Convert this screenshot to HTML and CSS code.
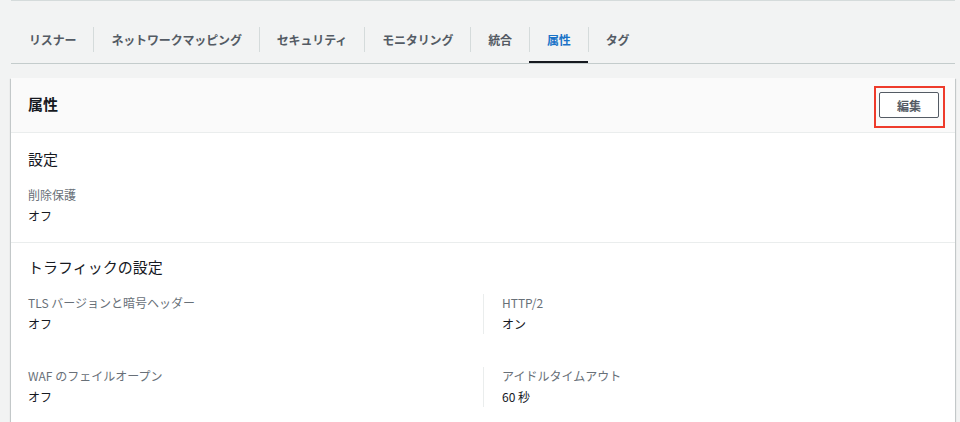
FILE: index.html
```html
<!DOCTYPE html>
<html lang="ja">
<head>
  <meta charset="UTF-8">
  <meta name="viewport" content="width=device-width, initial-scale=1.0">
  <title>属性</title>
  <link rel="stylesheet" href="styles.css">
</head>
<body>
  <div class="page">
    <div class="top-edge"></div>

    <ul class="tabs">
      <li class="tab"><span>リスナー</span></li>
      <li class="tab"><span>ネットワークマッピング</span></li>
      <li class="tab"><span>セキュリティ</span></li>
      <li class="tab"><span>モニタリング</span></li>
      <li class="tab"><span>統合</span></li>
      <li class="tab active"><span>属性</span></li>
      <li class="tab"><span>タグ</span></li>
    </ul>

    <div class="card">
      <div class="card-header">
        <h2 class="card-title">属性</h2>
        <span class="highlight">
          <button class="btn">編集</button>
        </span>
      </div>

      <div class="section">
        <h3 class="section-title">設定</h3>
        <div class="grid">
          <div class="item">
            <div class="label">削除保護</div>
            <div class="value">オフ</div>
          </div>
        </div>
      </div>

      <div class="section">
        <h3 class="section-title">トラフィックの設定</h3>
        <div class="grid two-col">
          <div class="item">
            <div class="label">TLS バージョンと暗号ヘッダー</div>
            <div class="value">オフ</div>
          </div>
          <div class="item split">
            <div class="label">HTTP/2</div>
            <div class="value">オン</div>
          </div>
          <div class="item">
            <div class="label">WAF のフェイルオープン</div>
            <div class="value">オフ</div>
          </div>
          <div class="item split">
            <div class="label">アイドルタイムアウト</div>
            <div class="value">60 秒</div>
          </div>
        </div>
      </div>
    </div>
  </div>
</body>
</html>
```

FILE: styles.css
```css
body {
  margin: 0;
  background: #f2f3f3;
  font-family: "Noto Sans CJK JP", "Noto Sans", sans-serif;
  color: #16191f;
  overflow: hidden;
}
.page {
  margin: 0 5px 0 11px;
}
.top-edge {
  height: 0;
  border-top: 1px solid #d5dbdb;
}
.tabs {
  list-style: none;
  margin: 14px 0 0;
  padding: 0;
  display: flex;
  border-bottom: 1px solid #c4cccc;
}
.tab {
  padding: 12px 0 9px;
  border-bottom: 2px solid transparent;
  font-size: 12px;
  font-weight: 700;
  letter-spacing: -0.15px;
  color: #545b64;
}
.tab span {
  display: block;
  padding: 0 17px;
  line-height: 25px;
  border-left: 1px solid #d5dbdb;
}
.tab:first-child span {
  padding-left: 18px;
  border-left: none;
}
.tab.active {
  color: #1a73c8;
  border-bottom-color: #16191f;
}
.card {
  margin-top: 14px;
  background: #fff;
  box-shadow: 0 1px 1px 0 rgba(0, 28, 36, 0.3), 1px 1px 1px 0 rgba(0, 28, 36, 0.15), -1px 1px 1px 0 rgba(0, 28, 36, 0.15);
}
.card-header {
  display: flex;
  align-items: center;
  justify-content: space-between;
  padding: 8px 10px 4px 17px;
  background: #fafafa;
  border-bottom: 1px solid #eaeded;
}
.card-title {
  margin: 0 0 6px;
  font-size: 15px;
  font-weight: 700;
  line-height: 22px;
}
.highlight {
  display: block;
  padding: 4px 4px 8px 3px;
  border: 2px solid #ee3b2b;
}
.btn {
  display: block;
  width: 60px;
  height: 26px;
  padding: 0;
  background: #fff;
  border: 1px solid #545b64;
  border-radius: 2px;
  font-family: inherit;
  font-size: 12px;
  font-weight: 700;
  color: #545b64;
}
.section {
  padding: 15px 17px 16px;
  border-bottom: 1px solid #eaeded;
}
.section + .section {
  padding-top: 13px;
}
.section-title {
  margin: 0 0 16px;
  font-size: 15px;
  font-weight: 400;
  line-height: 22px;
}
.grid {
  display: grid;
  grid-template-columns: 1fr;
}
.grid.two-col {
  grid-template-columns: 1fr 1fr;
  row-gap: 33px;
}
.item.split {
  border-left: 1px solid #eaeded;
  padding-left: 18px;
}
.label {
  font-size: 12px;
  line-height: 18px;
  color: #687078;
}
.value {
  margin-top: 2px;
  font-size: 12px;
  line-height: 20px;
}
```
